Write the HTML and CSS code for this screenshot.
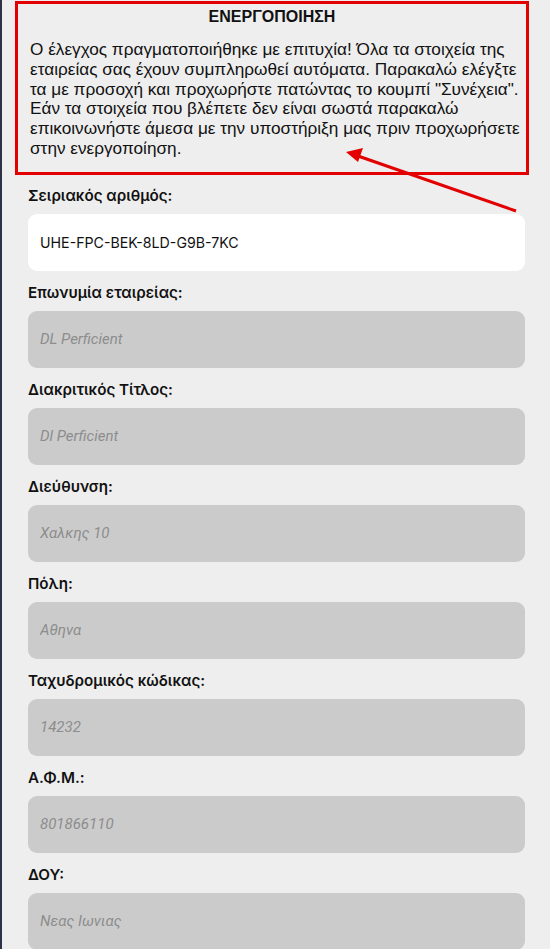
FILE: index.html
```html
<!DOCTYPE html>
<html lang="el">
<head>
  <meta charset="UTF-8" />
  <meta name="viewport" content="width=device-width, initial-scale=1.0" />
  <title>Ενεργοποίηση</title>
  <link rel="stylesheet" href="styles.css">
</head>
<body>

  <div class="page">
    <!-- Info box -->
    <div class="notice">
      <h2>ΕΝΕΡΓΟΠΟΙΗΣΗ</h2>
      <p>Ο έλεγχος πραγματοποιήθηκε με επιτυχία! Όλα τα στοιχεία της<br>
        εταιρείας σας έχουν συμπληρωθεί αυτόματα. Παρακαλώ ελέγξτε<br>
        τα με προσοχή και προχωρήστε πατώντας το κουμπί "Συνέχεια".<br>
        Εάν τα στοιχεία που βλέπετε δεν είναι σωστά παρακαλώ<br>
        επικοινωνήστε άμεσα με την υποστήριξη μας πριν προχωρήσετε<br>
        στην ενεργοποίηση.</p>
    </div>

    <!-- Arrow annotation -->
    <svg class="arrow" width="550" height="230" viewBox="0 0 550 230">
      <line x1="516" y1="211" x2="358" y2="156" stroke="#e30000" stroke-width="3" />
      <polygon points="346,152 363,148 358,162" fill="#e30000" />
    </svg>

    <form class="form">
      <div class="field">
        <label>Σειριακός αριθμός:</label>
        <input type="text" class="serial" value="UHE-FPC-BEK-8LD-G9B-7KC" />
      </div>
      <div class="field">
        <label>Επωνυμία εταιρείας:</label>
        <input type="text" placeholder="DL Perficient" disabled />
      </div>
      <div class="field">
        <label>Διακριτικός Τίτλος:</label>
        <input type="text" placeholder="Dl Perficient" disabled />
      </div>
      <div class="field">
        <label>Διεύθυνση:</label>
        <input type="text" placeholder="Χαλκης 10" disabled />
      </div>
      <div class="field">
        <label>Πόλη:</label>
        <input type="text" placeholder="Αθηνα" disabled />
      </div>
      <div class="field">
        <label>Ταχυδρομικός κώδικας:</label>
        <input type="text" placeholder="14232" disabled />
      </div>
      <div class="field">
        <label>Α.Φ.Μ.:</label>
        <input type="text" placeholder="801866110" disabled />
      </div>
      <div class="field">
        <label>ΔΟΥ:</label>
        <input type="text" placeholder="Νεας Ιωνιας" disabled />
      </div>
    </form>
  </div>

</body>
</html>
```

FILE: styles.css
```css
body {
  margin: 0;
  background-color: #eeeeee;
  font-family: "Liberation Sans", Arial, sans-serif;
  color: #111;
}

.page {
  position: relative;
  border-left: 2px solid #2c3146;
  min-height: 100vh;
  padding-top: 1px;
  padding-bottom: 20px;
}

/* Red framed notice */
.notice {
  margin: 0 21px 0 13px;
  border: 3px solid #e30000;
  padding: 3px 2px 13px 12px;
}

.notice h2 {
  margin: 0 10px 0 0;
  text-align: center;
  font-size: 16px;
  line-height: 20px;
  font-weight: bold;
}

.notice p {
  margin: 13px 0 0 0;
  font-size: 17.2px;
  line-height: 19.8px;
  white-space: nowrap;
}

.arrow {
  position: absolute;
  top: 0;
  left: -2px;
  pointer-events: none;
}

.form {
  padding: 0 25px 0 26px;
}

.field {
  margin-top: 12px;
}

.field:first-child {
  margin-top: 11px;
}

.field label {
  display: block;
  font-family: Inter, "Noto Sans", sans-serif;
  font-weight: 600;
  font-size: 15.2px;
  line-height: 20px;
  margin-bottom: 8px;
}

.field input {
  display: block;
  box-sizing: border-box;
  width: 100%;
  height: 57px;
  padding: 0 12px;
  border: none;
  border-radius: 9px;
  background-color: #cbcbcb;
  font-family: Roboto, "Noto Sans", sans-serif;
  font-size: 15px;
  color: #111;
  outline: none;
}

.field input::placeholder {
  color: #8d8d8d;
  font-style: italic;
}

.field input.serial {
  background-color: #ffffff;
  font-family: Inter, "Noto Sans", sans-serif;
  font-size: 14.2px;
}
```
